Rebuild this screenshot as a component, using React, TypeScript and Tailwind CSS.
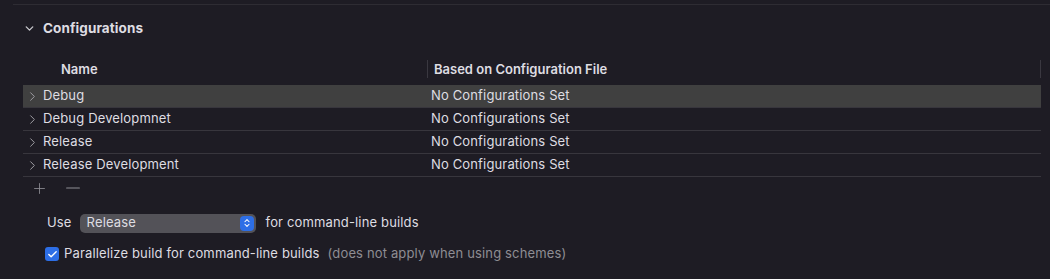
import { Check, ChevronDown, ChevronRight, ChevronsUpDown, Minus, Plus } from 'lucide-react'

const rows = ['Debug', 'Debug Developmnet', 'Release', 'Release Development']

export default function App() {
  return (
    <div
      className="w-[1050px] h-[279px] bg-[#1e1c24] overflow-hidden text-[#dedde2] tracking-[0.15px]"
      style={{ fontFamily: 'Inter, "Noto Sans", sans-serif' }}
    >
      <div className="pt-[4px] pl-[13px]">
        <div className="h-px bg-[#2e2c33]" />
      </div>

      {/* section header */}
      <div className="flex items-center h-[17px] mt-[15px] pl-[23px]">
        <ChevronDown size={13} strokeWidth={2.5} className="text-[#c9c8cd]" />
        <span className="ml-[7px] text-[13.5px] font-bold tracking-[0.1px]">Configurations</span>
      </div>

      {/* table */}
      <div className="ml-[23px] w-[1018px] mt-[21px]">
        <div className="flex items-start h-[27px] text-[13px] font-semibold tracking-[0px]">
          <div className="w-[404px] pl-[38px] h-[23px] flex items-center">Name</div>
          <div className="w-px h-[18px] bg-[#3a3840] mt-[2px]" />
          <div className="flex-1 pl-[6px] h-[23px] flex items-center">Based on Configuration File</div>
          <div className="w-px h-[18px] bg-[#3a3840] mt-[2px]" />
        </div>
        {rows.map((r, i) => (
          <div
            key={r}
            className={`flex items-center h-[23px] text-[13px] border-b border-[#38363d] ${
              i === 0 ? 'bg-[#404040]' : ''
            }`}
          >
            <div className="w-[408px] flex items-center pl-[2px]">
              <ChevronRight size={15} strokeWidth={1.6} className="text-[#9d9ca2]" />
              <span className="ml-[3px]">{r}</span>
            </div>
            <div>No Configurations Set</div>
          </div>
        ))}
      </div>

      <div className="flex items-center h-[22px] pl-[31px] text-[#8e8d93]">
        <Plus size={17} strokeWidth={1.2} />
        <Minus size={22} strokeWidth={1.1} className="ml-[14px]" />
      </div>

      {/* use row */}
      <div className="flex items-center mt-[14px] h-[20px] text-[13px]">
        <span className="ml-[47px]">Use</span>
        <div className="ml-[8px] w-[176px] h-[19px] rounded-[5px] bg-[#535258] flex items-center pl-[7px] pr-[2px]">
          <span className="flex-1">Release</span>
          <div className="w-[14px] h-[15px] rounded-[4px] bg-[#2d6ee6] flex items-center justify-center">
            <ChevronsUpDown size={10} strokeWidth={2.5} className="text-white" />
          </div>
        </div>
        <span className="ml-[10px]">for command-line builds</span>
      </div>

      {/* checkbox row */}
      <div className="flex items-center mt-[13px] h-[16px] text-[13px]">
        <div className="ml-[45px] w-[14px] h-[14px] rounded-[3px] bg-[#2d6ee6] flex items-center justify-center">
          <Check size={11} strokeWidth={3} className="text-white" />
        </div>
        <span className="ml-[5px]">Parallelize build for command-line builds</span>
        <span className="ml-[8px] text-[#8e8d93]">(does not apply when using schemes)</span>
      </div>
    </div>
  )
}
